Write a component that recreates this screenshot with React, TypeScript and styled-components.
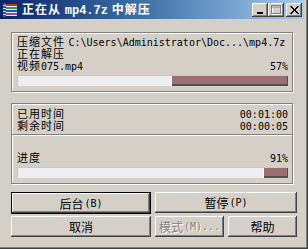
import React from "react";
import styled, { createGlobalStyle } from "styled-components";

const Global = createGlobalStyle`
  html, body { margin: 0; padding: 0; background: #d4d0c8; }
  body { font-family: "Noto Sans CJK SC", "Liberation Sans", sans-serif; }
`;

const FACE = "#d4d0c8";
const CJK = `"Noto Sans CJK SC", "Noto Sans CJK JP", sans-serif`;
const MONO = `"DejaVu Sans Mono", "Liberation Mono", "Noto Sans CJK SC", monospace`;

const Window = styled.div`
  width: 308px;
  height: 249px;
  box-sizing: border-box;
  background: ${FACE};
  padding: 0 4px 4px 0;
  box-shadow: inset -1px -1px #404040, inset -2px -2px #808080;
  display: flex;
  flex-direction: column;
  overflow: hidden;
`;

const TitleBar = styled.div`
  height: 19px;
  flex: none;
  display: flex;
  align-items: center;
  background: linear-gradient(to right, #0a246a 0%, #3a6ea5 45%, #a6caf0 100%);
  padding: 0 2px;
`;

const TitleIcon = styled.svg`
  width: 16px;
  height: 16px;
  flex: none;
`;

const TitleText = styled.div`
  margin-left: 4px;
  color: #fff;
  font-weight: bold;
  font-family: ${CJK};
  font-size: 12px;
  letter-spacing: 1px;
  line-height: 14px;
  white-space: nowrap;
  flex: 1;
`;

const TitleMono = styled.span`
  font-family: "Liberation Mono", monospace;
  font-size: 12px;
  letter-spacing: 0;
  font-weight: bold;
`;

const CaptionButtons = styled.div`
  display: flex;
  align-items: center;
`;

const CapBtn = styled.div<{ $gap?: boolean }>`
  width: 16px;
  height: 14px;
  box-sizing: border-box;
  background: ${FACE};
  margin-left: ${(p) => (p.$gap ? "2px" : "0")};
  box-shadow: inset -1px -1px #404040, inset 1px 1px #ffffff,
    inset -2px -2px #808080;
  display: flex;
  align-items: center;
  justify-content: center;
`;

const Body = styled.div`
  flex: 1;
  display: flex;
  flex-direction: column;
  padding: 13px 11px 0 11px;
`;

const Group = styled.div`
  border: 1px solid #808080;
  box-shadow: inset 1px 1px #ffffff, 1px 1px #ffffff;
  display: flex;
  flex-direction: column;
`;

const Section = styled.div<{ $sep?: boolean }>`
  display: flex;
  flex-direction: column;
  padding: ${(p) => (p.$sep ? "3px 4px 3px 5px" : "2px 4px 5px 5px")};
  border-bottom: ${(p) => (p.$sep ? "1px solid #808080" : "none")};
  box-shadow: ${(p) => (p.$sep ? "0 1px #ffffff" : "none")};
`;

const Line = styled.div`
  display: flex;
  justify-content: space-between;
  align-items: baseline;
  height: 12px;
  line-height: 12px;
  font-family: ${CJK};
  font-size: 11px;
  letter-spacing: 1px;
  color: #000;
  white-space: nowrap;
`;

const Mono = styled.span`
  font-family: ${MONO};
  font-size: 10px;
  letter-spacing: 0;
`;

const Spacer = styled.div<{ $h: number }>`
  height: ${(p) => p.$h}px;
  flex: none;
`;

const Bar = styled.div`
  height: 11px;
  margin-top: 4px;
  display: flex;
  box-sizing: border-box;
  background: #e9e9ef;
  border-top: 1px solid #c8c8cc;
  border-left: 1px solid #c8c8cc;
  box-shadow: inset 0 -2px #505050;
`;

const BarDone = styled.div`
  height: 100%;
  box-sizing: border-box;
  background: #eeeef2;
  border-right: 1px solid #ffffff;
`;

const BarRest = styled.div`
  flex: 1;
  height: 100%;
  box-sizing: border-box;
  background: #9c6f72;
  box-shadow: inset -1px -2px #505050;
`;

const Buttons = styled.div`
  margin-top: 8px;
  display: grid;
  grid-template-columns: 140px 69px 69px;
  column-gap: 4px;
  row-gap: 2px;
`;

const Btn = styled.div<{ $default?: boolean; $disabled?: boolean; $span?: number }>`
  grid-column: span ${(p) => p.$span ?? 1};
  height: ${(p) => (p.$default ? "22px" : "21px")};
  box-sizing: border-box;
  background: ${FACE};
  display: flex;
  align-items: center;
  justify-content: center;
  font-family: ${CJK};
  font-size: 12px;
  color: ${(p) => (p.$disabled ? "#808080" : "#000")};
  text-shadow: ${(p) => (p.$disabled ? "1px 1px #ffffff" : "none")};
  border: ${(p) => (p.$default ? "1px solid #000" : "none")};
  box-shadow: inset -1px -1px #404040, inset 1px 1px #ffffff,
    inset -2px -2px #808080;
  white-space: nowrap;
`;

const Acc = styled.span`
  font-family: ${MONO};
  font-size: 10px;
  margin-left: 1px;
`;

function Progress({ value }: { value: number }) {
  return (
    <Bar>
      <BarDone style={{ width: `${value}%` }} />
      <BarRest />
    </Bar>
  );
}

export default function App() {
  return (
    <>
      <Global />
      <Window>
        <TitleBar>
          <TitleIcon viewBox="0 0 16 16">
            <rect x="1" y="1" width="3" height="14" fill="#3050a0" />
            <rect x="4" y="2" width="11" height="3" fill="#c03030" />
            <rect x="4" y="5" width="11" height="3" fill="#30a040" />
            <rect x="4" y="8" width="11" height="3" fill="#2050d0" />
            <rect x="4" y="11" width="11" height="3" fill="#a040a0" />
            <rect x="4" y="4" width="11" height="1" fill="#f0f0f0" />
            <rect x="4" y="7" width="11" height="1" fill="#f0f0f0" />
            <rect x="4" y="10" width="11" height="1" fill="#f0f0f0" />
            <rect x="4" y="13" width="11" height="1" fill="#f0f0f0" />
            <rect x="1" y="3" width="3" height="1" fill="#e0e0e0" />
            <rect x="1" y="6" width="3" height="1" fill="#e0e0e0" />
            <rect x="1" y="9" width="3" height="1" fill="#e0e0e0" />
            <rect x="1" y="12" width="3" height="1" fill="#e0e0e0" />
          </TitleIcon>
          <TitleText>
            正在从 <TitleMono>mp4.7z</TitleMono> 中解压
          </TitleText>
          <CaptionButtons>
            <CapBtn>
              <svg width="12" height="10" viewBox="0 0 12 10">
                <rect x="3" y="7" width="6" height="2" fill="#000" />
              </svg>
            </CapBtn>
            <CapBtn>
              <svg width="12" height="10" viewBox="0 0 12 10">
                <rect x="2.5" y="1.5" width="9" height="8" fill="none" stroke="#ffffff" />
                <rect x="1.5" y="0.5" width="9" height="8" fill="none" stroke="#808080" />
                <rect x="1.5" y="1.5" width="9" height="1" fill="#808080" />
              </svg>
            </CapBtn>
            <CapBtn $gap>
              <svg width="12" height="10" viewBox="0 0 12 10">
                <path d="M2 1 L10 9 M3 1 L11 9 M10 1 L2 9 M11 1 L3 9" stroke="#000" strokeWidth="1" />
              </svg>
            </CapBtn>
          </CaptionButtons>
        </TitleBar>
        <Body>
          <Group>
            <Section>
              <Line>
                <span>
                  压缩文件 <Mono>C:\Users\Administrator\Doc...\mp4.7z</Mono>
                </span>
              </Line>
              <Line>
                <span>正在解压</span>
              </Line>
              <Line>
                <span>
                  视频<Mono>075.mp4</Mono>
                </span>
                <Mono>57%</Mono>
              </Line>
              <Progress value={57} />
            </Section>
          </Group>
          <Spacer $h={11} />
          <Group>
            <Section $sep>
              <Line>
                <span>已用时间</span>
                <Mono>00:01:00</Mono>
              </Line>
              <Line>
                <span>剩余时间</span>
                <Mono>00:00:05</Mono>
              </Line>
            </Section>
            <Section>
              <Spacer $h={14} />
              <Line>
                <span>进度</span>
                <Mono>91%</Mono>
              </Line>
              <Progress value={91} />
            </Section>
          </Group>
          <Buttons>
            <Btn $default>
              后台<Acc>(B)</Acc>
            </Btn>
            <Btn $span={2}>
              暂停<Acc>(P)</Acc>
            </Btn>
            <Btn>取消</Btn>
            <Btn $disabled>
              模式<Acc>(M)...</Acc>
            </Btn>
            <Btn>帮助</Btn>
          </Buttons>
        </Body>
      </Window>
    </>
  );
}
